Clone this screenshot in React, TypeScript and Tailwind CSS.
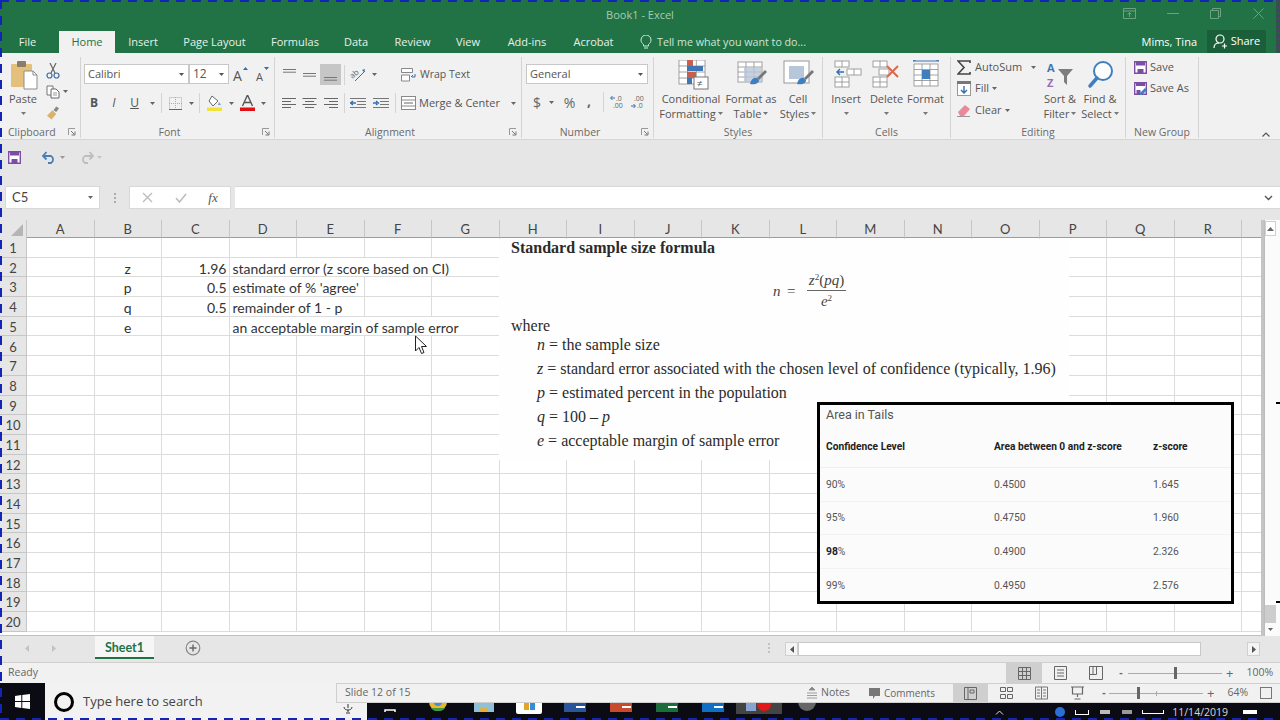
import React from "react";

const Caret = ({ c = "#666", className = "" }: { c?: string; className?: string }) => (
  <svg width="5" height="3" viewBox="0 0 7 4" className={className} preserveAspectRatio="none"><path d="M0 0h7L3.500 4z" fill={c} /></svg>
);
const Launcher = () => (
  <svg width="8" height="8" viewBox="0 0 8 8" className="absolute right-[4px] top-[2px]">
    <path d="M.5 7V.5H7" fill="none" stroke="#999" /><path d="M3 3l3.500 3.500M7 3.500V7H3.500" fill="none" stroke="#777" />
  </svg>
);
const Group = ({ w, label, launcher, children, labelClass = "" }: { w: string; label: string; launcher?: boolean; children: React.ReactNode; labelClass?: string }) => (
  <div className={`${w} h-[81px] shrink-0 border-r border-[#d4d4d4] flex flex-col`}>
    <div className="h-[69px] relative">{children}</div>
    <div className={`relative h-[12px] leading-[12px] text-[10.500px] text-[#6a6a6a] text-center ${labelClass}`}>
      {label}
      {launcher && <Launcher />}
    </div>
  </div>
);
const Box = ({ w, children, className = "" }: { w: string; children?: React.ReactNode; className?: string }) => (
  <div className={`${w} shrink-0 flex items-center justify-center ${className}`}>{children}</div>
);
const VSep = ({ className = "" }: { className?: string }) => <div className={`w-px h-[20px] bg-[#d4d4d4] shrink-0 ${className}`} />;
const Combo = ({ w, text, textClass = "" }: { w: string; text: string; textClass?: string }) => (
  <div className={`${w} h-[20px] bg-white border border-[#c8c8c8] flex items-center justify-between px-[3px] shrink-0`}>
    <span className={`text-[11px] text-[#555] ${textClass}`}>{text}</span>
    <Caret c="#555" className="mr-[1px]" />
  </div>
);

const AlignLines = ({ v, h }: { v: "t" | "m" | "b"; h?: boolean }) => {
  const y = v === "t" ? 2 : v === "m" ? 6 : 10;
  return (
    <svg width="15" height="15" viewBox="0 0 15 15">
      {[0, 3, 6].filter((_, i) => i < 2 || !h).map((d) => (
        <rect key={d} x="1" y={y + d * 0.9} width="13" height="1" fill="#777" />
      ))}
    </svg>
  );
};
const HAlign = ({ a }: { a: "l" | "c" | "r" }) => {
  const rows = [14, 9, 14, 9];
  return (
    <svg width="15" height="13" viewBox="0 0 15 13">
      {rows.map((w, i) => {
        const x = a === "l" ? 0 : a === "c" ? (15 - w) / 2 : 15 - w;
        return <rect key={i} x={x} y={1 + i * 3} width={w} height="1" fill="#666" />;
      })}
    </svg>
  );
};
const Indent = ({ right }: { right?: boolean }) => (
  <svg width="16" height="13" viewBox="0 0 16 13">
    {[1, 4, 7, 10].map((y) => <rect key={y} x={y === 4 || y === 7 ? 7 : 0} y={y} width={y === 4 || y === 7 ? 9 : 16} height="1" fill="#777" />)}
    <path d={right ? "M0 6h4M3 4l2.500 2L3 8" : "M6 6H1M3 4L.5 6 3 8"} fill="none" stroke="#2f6fb0" strokeWidth="1.300" />
  </svg>
);
const Save = ({ c = "#7b4ea3" }: { c?: string }) => (
  <svg width="13" height="13" viewBox="0 0 13 13">
    <path d="M.7.7h11.600v11.600H.7z" fill="#fff" stroke={c} strokeWidth="1.400" />
    <rect x="2" y="1" width="9" height="3.500" fill={c} /><rect x="3.500" y="8" width="6" height="4" fill={c} />
  </svg>
);
const SaveAs = () => (
  <svg width="13" height="13" viewBox="0 0 13 13">
    <path d="M.7.7h11.600v11.600H.7z" fill="#fff" stroke="#7b4ea3" strokeWidth="1.400" />
    <rect x="2" y="1" width="9" height="3" fill="#7b4ea3" /><rect x="2.500" y="8" width="4" height="4" fill="#7b4ea3" />
    <path d="M6 11l5-5 2 2-5 5H6z" fill="#3f7fbd" />
  </svg>
);
const BigIcon = ({ children }: { children: React.ReactNode }) => (
  <svg width="36" height="30" viewBox="0 0 36 30">{children}</svg>
);
const TableGrid = ({ x, y, w, h, n = 3, m = 4 }: { x: number; y: number; w: number; h: number; n?: number; m?: number }) => (
  <g stroke="#8d8d8d" strokeWidth="0.800" fill="#fff">
    <rect x={x} y={y} width={w} height={h} />
    {Array.from({ length: n - 1 }, (_, i) => <path key={i} d={`M${x + ((i + 1) * w) / n} ${y}v${h}`} />)}
    {Array.from({ length: m - 1 }, (_, i) => <path key={"r" + i} d={`M${x} ${y + ((i + 1) * h) / m}h${w}`} />)}
  </g>
);
const Brush = ({ x, y }: { x: number; y: number }) => (
  <g transform={`translate(${x} ${y})`}>
    <path d="M7 8L15 0l2 2-8 8z" fill="#777" />
    <path d="M0 14c1-5 4-7 7-6l2 2c0 3-3 5-9 4z" fill="#3f7fbd" />
  </g>
);
const BigBtn = ({ w, icon, l1, l2, caret }: { w: string; icon: React.ReactNode; l1: string; l2?: string; caret?: boolean }) => (
  <div className={`${w} shrink-0 flex flex-col items-center pt-[3px] text-[11px] leading-[15px] text-[#555]`}>
    <div className="h-[30px] flex items-center justify-center">{icon}</div>
    <div className="mt-[1px] whitespace-nowrap">{l1}</div>
    {l2 ? (
      <div className="flex items-center gap-[2px] whitespace-nowrap">{l2}{caret && <Caret c="#777" />}</div>
    ) : (
      <div className="h-[15px] flex items-center"><Caret c="#777" /></div>
    )}
  </div>
);

const Ribbon = () => (
  <div className="h-[87px] bg-[#f1f1f1] border-b border-[#d6d6d6] pt-[4px] flex shrink-0 [font-family:'Open_Sans',sans-serif]">
    <Group w="w-[81px]" label="Clipboard" launcher labelClass="text-left pl-[8px]">
      <div className="flex">
        <BigBtn w="w-[46px]" l1="Paste" icon={
          <svg width="28" height="29" viewBox="0 0 28 29" className="ml-[3px]">
            <rect x="0" y="3" width="21" height="23" rx="1" fill="#e3c17d" />
            <rect x="6" y="0" width="9" height="6" rx="1" fill="#8a7d6a" />
            <path d="M13 10h9l4 4v14H13z" fill="#fff" stroke="#8d8d8d" /><path d="M22 10v4h4" fill="none" stroke="#8d8d8d" />
          </svg>
        } />
        <div className="flex flex-col pt-[3px]">
          <Box w="w-[14px] h-[21px]">
            <svg width="14" height="16" viewBox="0 0 14 16"><path d="M4 0l5 10M10 0L5 10" stroke="#666" strokeWidth="1.200" /><circle cx="3.500" cy="12.500" r="2.500" fill="none" stroke="#3c6ea6" strokeWidth="1.200" /><circle cx="10.500" cy="12.500" r="2.500" fill="none" stroke="#3c6ea6" strokeWidth="1.200" /></svg>
          </Box>
          <div className="flex items-center h-[21px]">
            <Box w="w-[14px]">
              <svg width="14" height="14" viewBox="0 0 14 14"><path d="M1 1h6v9H1z" fill="#fff" stroke="#777" /><path d="M5 4h5l3 3v6H5z" fill="#fff" stroke="#666" /><path d="M7 8h4M7 10h4" stroke="#999" /></svg>
            </Box>
            <Caret className="ml-[3px]" />
          </div>
          <Box w="w-[14px] h-[21px]">
            <svg width="15" height="15" viewBox="0 0 15 15"><path d="M8 5l3-4 3 2-3 4z" fill="#888" /><path d="M1 11l6-6 4 4-5 6z" fill="#d9b36c" /></svg>
          </Box>
        </div>
      </div>
    </Group>
    <Group w="w-[194px]" label="Font" launcher labelClass="pr-[16px]">
      <div className="flex pl-[3px] pt-[7px] h-[27px] items-center">
        <Combo w="w-[105px]" text="Calibri" />
        <Combo w="w-[40px]" text="12" textClass="text-[12px]" />
        <Box w="w-[23px]">
          <svg width="15" height="15" viewBox="0 0 15 15" className="overflow-visible"><text x="0" y="14" fontSize="14" fill="#555" fontFamily="Open Sans">A</text><path d="M10 3l2.500-3L15 3z" fill="#2f6fb0" /></svg>
        </Box>
        <Box w="w-[20px]">
          <svg width="13" height="15" viewBox="0 0 13 15" className="overflow-visible"><text x="0" y="14" fontSize="11" fill="#555" fontFamily="Open Sans">A</text><path d="M8 0l2.500 3L13 0z" fill="#2f6fb0" /></svg>
        </Box>
      </div>
      <div className="flex items-center h-[20px] mt-[9px] pl-[3px] text-[12px] text-[#555]">
        <Box w="w-[20px]" className="font-bold">B</Box>
        <Box w="w-[20px]" className="italic">I</Box>
        <Box w="w-[21px]" className="underline">U</Box>
        <Box w="w-[15px]"><Caret /></Box>
        <VSep className="ml-[1px]" />
        <Box w="w-[26px]">
          <svg width="13" height="13" viewBox="0 0 13 13"><rect x=".5" y=".5" width="12" height="12" fill="none" stroke="#aaa" strokeDasharray="1 1" /><path d="M6.500 0v13M0 6.500h13" stroke="#aaa" strokeDasharray="1 1" /><path d="M0 12.500h13" stroke="#666" /></svg>
        </Box>
        <Box w="w-[6px]"><Caret /></Box>
        <div className="w-[5px]" />
        <VSep />
        <Box w="w-[27px]" className="ml-[1px]">
          <svg width="15" height="16" viewBox="0 0 15 16"><path d="M5 1l6 5-5 5-4-5z" fill="#fff" stroke="#666" /><path d="M12 7l2 3h-3z" fill="#6aa0d0" /><rect y="12.500" width="15" height="3.500" fill="#f2e33a" /></svg>
        </Box>
        <Box w="w-[6px]"><Caret /></Box>
        <Box w="w-[26px]">
          <svg width="15" height="16" viewBox="0 0 15 16"><path d="M2.500 11L7.500 0l5 11M4.500 7.500h6" fill="none" stroke="#555" strokeWidth="1.400" /><rect y="12.500" width="15" height="3.500" fill="#e30e16" /></svg>
        </Box>
        <Box w="w-[6px]"><Caret /></Box>
      </div>
    </Group>
    <Group w="w-[247px]" label="Alignment" launcher labelClass="pr-[16px]">
      <div className="flex items-center h-[21px] mt-[7px] pl-[4px]">
        <Box w="w-[20px]"><AlignLines v="t" h /></Box>
        <Box w="w-[21px]"><AlignLines v="m" h /></Box>
        <Box w="w-[21px] h-[21px] bg-[#c6c6c6]"><AlignLines v="b" /></Box>
        <div className="w-[3px]" /><VSep />
        <Box w="w-[26px]">
          <svg width="16" height="15" viewBox="0 0 16 15" className="overflow-visible">
            <text x="0" y="10" fontSize="8" fill="#666" fontFamily="Open Sans" transform="rotate(-40 4 8)">ab</text>
            <path d="M5 14L15 4" fill="none" stroke="#666" /><path d="M15 2l-3 1 2 2z" fill="#2f6fb0" />
          </svg>
        </Box>
        <Box w="w-[6px]"><Caret /></Box>
        <div className="w-[24px]" />
        <div className="flex items-center gap-[3px] text-[10.500px] text-[#555]">
          <svg width="16" height="14" viewBox="0 0 16 14"><path d="M.5.5h11v4H.5zM.5 7h8v6H.500z" fill="#fff" stroke="#888" /><path d="M11 9h3V6M10 9l2-2" fill="none" stroke="#2f6fb0" /></svg>
          Wrap Text
        </div>
      </div>
      <div className="flex items-center h-[20px] mt-[8px] pl-[4px]">
        <Box w="w-[20px]"><HAlign a="l" /></Box>
        <Box w="w-[21px]"><HAlign a="c" /></Box>
        <Box w="w-[21px]"><HAlign a="r" /></Box>
        <div className="w-[3px]" /><VSep />
        <Box w="w-[25px]"><Indent /></Box>
        <Box w="w-[21px]"><Indent right /></Box>
        <div className="w-[4px]" /><VSep />
        <div className="flex items-center gap-[3px] text-[11px] text-[#555] ml-[5px] whitespace-nowrap">
          <svg width="15" height="14" viewBox="0 0 15 14"><rect x=".5" y=".5" width="14" height="13" fill="#fff" stroke="#888" /><path d="M.5 4h14M.5 10h14" stroke="#888" /><path d="M3 7h9" stroke="#666" /></svg>
          Merge &amp; Center
          <Caret className="ml-[8px]" />
        </div>
      </div>
    </Group>
    <Group w="w-[132px]" label="Number" launcher labelClass="pr-[15px]">
      <div className="pl-[4px] pt-[7px]"><Combo w="w-[122px]" text="General" /></div>
      <div className="flex items-center h-[22px] mt-[7px] pl-[8px] text-[#666]">
        <Box w="w-[14px]" className="text-[14px]">$</Box>
        <Box w="w-[15px]"><Caret /></Box>
        <Box w="w-[21px]" className="text-[14px]">%</Box>
        <Box w="w-[18px]" className="font-bold text-[14px] -mt-[3px]">,</Box>
        <div className="w-[5px]" /><VSep />
        <Box w="w-[27px]" className="text-[8px] leading-[8px]">
          <svg width="16" height="14" viewBox="0 0 16 14" className="overflow-visible"><path d="M5 3H1M2.500 1L.5 3l2 2" fill="none" stroke="#2f6fb0" /><text x="6" y="6" fontSize="7" fill="#666" fontFamily="Open Sans">.0</text><text x="3" y="13" fontSize="7" fill="#666" fontFamily="Open Sans">.00</text></svg>
        </Box>
        <Box w="w-[14px]" className="text-[8px] leading-[8px]">
          <svg width="16" height="14" viewBox="0 0 16 14" className="overflow-visible"><text x="4" y="6" fontSize="7" fill="#666" fontFamily="Open Sans">.00</text><path d="M1 11h4M3.500 9l2 2-2 2" fill="none" stroke="#2f6fb0" /><text x="7" y="13" fontSize="7" fill="#666" fontFamily="Open Sans">.0</text></svg>
        </Box>
      </div>
    </Group>
    <Group w="w-[169px]" label="Styles">
      <div className="flex">
        <BigBtn w="w-[74px]" l1="Conditional" l2="Formatting" caret icon={
          <BigIcon>
            <TableGrid x={6} y={0} w={26} h={24} />
            <rect x="14" y="0" width="6" height="6" fill="#c95f4b" /><rect x="14" y="6" width="16" height="5" fill="#3f77b5" /><rect x="14" y="12" width="9" height="6" fill="#c95f4b" /><rect x="14" y="18" width="5" height="6" fill="#3f77b5" />
            <rect x="21" y="17" width="14" height="12" fill="#fff" stroke="#777" />
            <text x="24" y="27" fontSize="10" fill="#555" fontFamily="Open Sans">≠</text>
          </BigIcon>
        } />
        <BigBtn w="w-[46px]" l1="Format as" l2="Table" caret icon={
          <BigIcon>
            <TableGrid x={5} y={2} w={24} h={20} />
            <rect x="11" y="7" width="18" height="15" fill="#b9c6d8" opacity=".8" />
            <Brush x={17} y={10} />
          </BigIcon>
        } />
        <BigBtn w="w-[48px]" l1="Cell" l2="Styles" caret icon={
          <BigIcon>
            <rect x="4" y="1" width="25" height="22" fill="#fff" stroke="#999" />
            <rect x="9" y="6" width="15" height="13" fill="#b6c7dc" />
            <Brush x={17} y={10} />
          </BigIcon>
        } />
      </div>
    </Group>
    <Group w="w-[128px]" label="Cells">
      <div className="flex pl-[1px]">
        <BigBtn w="w-[44px]" l1="Insert" icon={
          <BigIcon>
            <g fill="#fff" stroke="#8a8a8a" strokeWidth=".8"><rect x="7" y="1" width="14" height="6" /><path d="M14 1v6" /><rect x="19" y="9" width="14" height="6" /><path d="M26 9v6" /><rect x="7" y="17" width="14" height="10" /><path d="M14 17v10M7 22h14" /></g>
            <path d="M16 12H9M12 9l-3 3 3 3" fill="none" stroke="#2f6fb0" strokeWidth="1.400" />
          </BigIcon>
        } />
        <BigBtn w="w-[37px]" l1="Delete" icon={
          <BigIcon>
            <g fill="#fff" stroke="#8a8a8a" strokeWidth=".8"><rect x="4" y="1" width="14" height="6" /><path d="M11 1v6" /><rect x="10" y="9" width="10" height="6" /><rect x="4" y="17" width="14" height="10" /><path d="M11 17v10M4 22h14" /></g>
            <path d="M18 6l11 11M29 6L18 17" stroke="#d9694f" strokeWidth="2" />
          </BigIcon>
        } />
        <BigBtn w="w-[41px]" l1="Format" icon={
          <BigIcon>
            <path d="M5 1h26M5 1l3-1M31 1l-3-1" stroke="#3f77b5" fill="none" />
            <TableGrid x={6} y={4} w={24} h={22} />
            <rect x="14" y="10" width="8" height="9" fill="#3f7fbd" />
          </BigIcon>
        } />
      </div>
    </Group>
    <Group w="w-[175px]" label="Editing">
      <div className="flex">
        <div className="w-[91px] pl-[6px] flex flex-col text-[11px] text-[#555] shrink-0">
          <div className="flex items-center h-[21px]">
            <svg width="14" height="15" viewBox="0 0 14 15"><path d="M13 3V1H1l6 6.500L1 14h12v-2" fill="none" stroke="#444" strokeWidth="1.600" /></svg>
            <span className="ml-[4px]">AutoSum</span><Caret className="ml-[9px]" />
          </div>
          <div className="flex items-center h-[21px]">
            <svg width="14" height="15" viewBox="0 0 14 15"><rect x=".5" y=".5" width="13" height="14" fill="#fff" stroke="#999" /><rect width="14" height="3" fill="#777" /><path d="M7 5v7M4 9l3 3 3-3" fill="none" stroke="#2f6fb0" strokeWidth="1.400" /></svg>
            <span className="ml-[4px]">Fill</span><Caret className="ml-[3px]" />
          </div>
          <div className="flex items-center h-[22px]">
            <svg width="14" height="13" viewBox="0 0 14 13"><path d="M1 8l7-7 5 4-6 7H3z" fill="#e98a9a" /><path d="M0 12.500h13" stroke="#999" /></svg>
            <span className="ml-[4px]">Clear</span><Caret className="ml-[3px]" />
          </div>
        </div>
        <BigBtn w="w-[36px]" l1="Sort &" l2="Filter" caret icon={
          <svg width="30" height="28" viewBox="0 0 30 28" className="overflow-visible">
            <text x="2" y="11" fontSize="11" fontWeight="700" fill="#3f77b5" fontFamily="Open Sans">A</text>
            <text x="2" y="26" fontSize="11" fontWeight="700" fill="#9a6ab5" fontFamily="Open Sans">Z</text>
            <path d="M13 8h15l-6 7v9l-3-3v-6z" fill="#7d7d7d" />
          </svg>
        } />
        <BigBtn w="w-[44px]" l1="Find &" l2="Select" caret icon={
          <svg width="28" height="30" viewBox="0 0 28 30">
            <circle cx="17" cy="11" r="9" fill="#fff" stroke="#3f7fbd" strokeWidth="2" />
            <path d="M11 18L4 26" stroke="#3f7fbd" strokeWidth="3.500" strokeLinecap="round" />
          </svg>
        } />
      </div>
    </Group>
    <Group w="w-[73px]" label="New Group">
      <div className="flex flex-col pl-[8px] text-[11px] text-[#555]">
        <div className="flex items-center h-[21px] gap-[3px]"><Save /><span>Save</span></div>
        <div className="flex items-center h-[21px] gap-[3px]"><SaveAs /><span>Save As</span></div>
      </div>
    </Group>
    <div className="flex-1 flex items-end justify-end pb-[2px] pr-[10px]">
      <svg width="8" height="5" viewBox="0 0 8 5"><path d="M.5 4.500L4 1l3.500 3.500" fill="none" stroke="#555" strokeWidth="1.200" /></svg>
    </div>
  </div>
);

const TITLE_TABS: [string, string][] = [
  ["Insert", "w-[56px]"], ["Page Layout", "w-[87px]"], ["Formulas", "w-[74px]"], ["Data", "w-[48px]"],
  ["Review", "w-[65px]"], ["View", "w-[46px]"], ["Add-ins", "w-[72px]"], ["Acrobat", "w-[61px]"],
];

const TitleBar = () => (
  <div className="bg-[#217346] shrink-0 [font-family:'Open_Sans',sans-serif]">
    <div className="h-[2px] bg-[repeating-linear-gradient(90deg,#1424b4_0_9px,#217346_9px_16px)]" />
    <div className="h-[29px] flex items-center">
      <div className="w-[1280px] text-center text-[11px] text-[#a5cdb5] -mt-[2px]">Book1 - Excel</div>
    </div>
    <div className="h-[22px] flex items-stretch text-[11px] text-[#e6f1ea]">
      <div className="w-[55px] flex items-center justify-center font-medium">File</div>
      <div className="w-[4px]" />
      <div className="w-[56px] bg-[#f1f1f1] text-[#217346] flex items-center justify-center">Home</div>
      {TITLE_TABS.map(([t, w]) => (
        <div key={t} className={`${w} flex items-center justify-center`}>{t}</div>
      ))}
      <div className="ml-[16px] w-[17px] flex items-center">
        <svg width="12" height="15" viewBox="0 0 12 15"><path d="M3.500 9.500C2 8 1 7 1 5a5 5 0 0110 0c0 2-1 3-2.500 4.500v1.500h-5zM4 13h4" fill="none" stroke="#d5e8dc" strokeWidth="1" /></svg>
      </div>
      <div className="flex items-center text-[10.700px] text-[#cfe5d7] whitespace-nowrap">Tell me what you want to do...</div>
      <div className="flex-1" />
      <div className="flex items-center text-white mr-[10px] whitespace-nowrap">Mims, Tina</div>
      <div className="w-[59px] bg-[#1b5f3a] flex items-center justify-center gap-[3px] text-white mr-[14px] -mt-[1px]">
        <svg width="15" height="15" viewBox="0 0 15 15"><circle cx="7" cy="5" r="4" fill="none" stroke="#fff" strokeWidth="1.200" /><path d="M1 14c0-3 2-5 5-5M9 12h5M11.500 9.500v5" fill="none" stroke="#fff" strokeWidth="1.200" /></svg>
        Share
      </div>
    </div>
  </div>
);

const QAT = () => (
  <div className="h-[45px] bg-[#e6e6e6] flex items-center pl-[8px] pb-[11px] shrink-0">
    <Save c="#7b4ea3" />
    <Box w="w-[22px]" className="ml-[17px]">
      <svg width="15" height="13" viewBox="0 0 15 13"><path d="M1 5h8a4 4 0 010 7H6M4.500 1L1 5l3.500 3.500" fill="none" stroke="#4a7eb5" strokeWidth="1.800" /></svg>
    </Box>
    <Caret c="#999" />
    <Box w="w-[22px]" className="ml-[10px]">
      <svg width="15" height="13" viewBox="0 0 15 13"><path d="M14 5H6a4 4 0 000 7h3M10.500 1L14 5l-3.500 3.500" fill="none" stroke="#bdbdbd" strokeWidth="1.800" /></svg>
    </Box>
    <Caret c="#c6c6c6" />
  </div>
);

const FormulaBar = () => (
  <div className="h-[35px] bg-[#e6e6e6] flex gap-0 pt-[1px] shrink-0 items-start [font-family:'Lato',sans-serif]">
    <div className="ml-[5px] w-[95px] h-[23px] bg-white border border-[#d8d8d8] flex items-center justify-between px-[6px] text-[13px] text-[#444]">
      C5<Caret />
    </div>
    <Box w="w-[29px] h-[23px]">
      <svg width="2" height="10" viewBox="0 0 2 10"><path d="M1 0v2M1 4v2M1 8v2" stroke="#999" strokeWidth="1.500" /></svg>
    </Box>
    <div className="w-[102px] h-[23px] bg-white border border-[#d8d8d8] flex items-center">
      <Box w="w-[34px]">
        <svg width="11" height="11" viewBox="0 0 11 11"><path d="M1 1l9 9M10 1l-9 9" stroke="#bdbdbd" strokeWidth="1.400" /></svg>
      </Box>
      <Box w="w-[34px]">
        <svg width="12" height="10" viewBox="0 0 12 10"><path d="M1 5l3.500 4L11 1" fill="none" stroke="#bdbdbd" strokeWidth="1.600" /></svg>
      </Box>
      <Box w="w-[30px]" className="[font-family:'Liberation_Serif',serif] italic text-[13px] text-[#555]">fx</Box>
    </div>
    <div className="ml-[4px] flex-1 h-[23px] bg-white border-y border-[#d8d8d8] flex items-center justify-end pr-[7px]">
      <svg width="9" height="6" viewBox="0 0 9 6"><path d="M1 1l3.500 3.500L8 1" fill="none" stroke="#555" strokeWidth="1.400" /></svg>
    </div>
  </div>
);

const COLS = "ABCDEFGHIJKLMNOPQR".split("");
const GRID = "grid grid-cols-[27px_repeat(18,67.500px)_1fr]";
const BODY: Record<number, { c: number; span?: string; text: string; cls: string }[]> = {
  2: [{ c: 2, text: "z", cls: "text-center" }, { c: 3, text: "1.96", cls: "text-right pr-[2px]" }, { c: 4, span: "col-span-4", text: "standard error (z score based on CI)", cls: "pl-[3px]" }],
  3: [{ c: 2, text: "p", cls: "text-center" }, { c: 3, text: "0.5", cls: "text-right pr-[2px]" }, { c: 4, span: "col-span-2", text: "estimate of % 'agree'", cls: "pl-[3px]" }],
  4: [{ c: 2, text: "q", cls: "text-center" }, { c: 3, text: "0.5", cls: "text-right pr-[2px]" }, { c: 4, span: "col-span-2", text: "remainder of 1 - p", cls: "pl-[3px]" }],
  5: [{ c: 2, text: "e", cls: "text-center" }, { c: 4, span: "col-span-4", text: "an acceptable margin of sample error", cls: "pl-[3px]" }],
};
const SPAN: Record<string, number> = { "col-span-4": 4, "col-span-2": 2 };

const Sheet = () => (
  <div className="flex shrink-0 [font-family:'Lato',sans-serif]">
    <div className="w-[1261px] shrink-0">
      <div className={`${GRID} h-[18px] bg-[#e6e6e6] text-[13px] text-[#444]`}>
        <div className="border-r border-[#c6c6c6] flex items-end justify-end pr-[3px] pb-[2px]">
          <svg width="12" height="12" viewBox="0 0 12 12"><path d="M12 0v12H0z" fill="#b5b5b5" /></svg>
        </div>
        {COLS.map((c) => (
          <div key={c} className="border-r border-[#c6c6c6] border-b border-b-[#9c9c9c] flex items-center justify-center leading-none pt-[2px]">{c}</div>
        ))}
        <div className="border-b border-[#9c9c9c]" />
      </div>
      <div className={`${GRID} auto-rows-[19.700px] h-[398px] bg-white text-[14px] text-[#333] border-b border-[#c0c0c0] content-start`}>
        {Array.from({ length: 20 }, (_, i) => i + 1).map((r) => {
          const items = BODY[r] || [];
          const out: React.ReactNode[] = [
            <div key="h" className="bg-[#e6e6e6] border-r border-b border-[#c6c6c6] flex items-center justify-center text-[13px] text-[#444] pt-[3px]">{r}</div>,
          ];
          for (let c = 1; c <= 19; c++) {
            const it = items.find((x) => x.c === c);
            if (it) {
              out.push(
                <div key={c} className={`${it.span || ""} border-r border-b border-[#dcdcdc] whitespace-nowrap leading-[22px] ${it.cls}`}>{it.text}</div>
              );
              if (it.span) c += SPAN[it.span] - 1;
            } else {
              out.push(<div key={c} className={`${c === 19 ? "" : "border-r"} border-b border-[#dcdcdc]`} />);
            }
          }
          return <React.Fragment key={r}>{out}</React.Fragment>;
        })}
      </div>
    </div>
    <div className="flex-1 h-[416px] bg-[#fbfbfb] border-l-[3px] border-[#c4c4c4] flex">
      <div className="w-[1px] bg-[#bdbdbd]" />
      <div className="w-[11px] flex flex-col items-center pt-[1px]">
        <div className="w-[11px] h-[15px] bg-white border border-[#d0d0d0] flex items-center justify-center">
          <svg width="7" height="4" viewBox="0 0 7 4"><path d="M3.500 0L7 4H0z" fill="#666" /></svg>
        </div>
        <div className="flex-1" />
        <div className="w-[11px] h-[18px] bg-[#cdcdcd]" />
        <div className="w-[11px] h-[13px] flex items-center justify-center"><Caret /></div>
      </div>
      <div className="flex-1 flex flex-col">
        <div className="h-[182px]" />
        <div className="h-[2px] bg-black" />
        <div className="h-[197px]" />
        <div className="h-[2px] bg-black" />
      </div>
    </div>
  </div>
);

const SheetTabs = () => (
  <div className="h-[26px] bg-[#e6e6e6] flex items-start shrink-0 [font-family:'Lato',sans-serif]">
    <div className="w-[95px] h-[24px] flex items-center gap-[23px] pl-[25px] shrink-0">
      <svg width="4" height="7" viewBox="0 0 4 7"><path d="M4 0v7L0 3.500z" fill="#c2c2c2" /></svg>
      <svg width="4" height="7" viewBox="0 0 4 7"><path d="M0 0v7l4-3.500z" fill="#c2c2c2" /></svg>
    </div>
    <div className="w-[59px] h-[23px] pt-[3px] bg-[#f6f6f6] border-b-2 border-[#217346] text-[#217346] font-bold text-[12.500px] flex items-center justify-center">Sheet1</div>
    <Box w="w-[78px] h-[24px]">
      <svg width="16" height="16" viewBox="0 0 16 16"><circle cx="8" cy="8" r="6.800" fill="none" stroke="#888" strokeWidth="1.200" /><path d="M8 4.500v7M4.500 8h7" stroke="#666" strokeWidth="1.400" /></svg>
    </Box>
    <div className="flex-1" />
    <Box w="w-[4px] h-[24px]" className="mr-[14px]">
      <svg width="2" height="10" viewBox="0 0 2 10"><path d="M1 0v2M1 4v2M1 8v2" stroke="#aaa" strokeWidth="1.200" /></svg>
    </Box>
    <div className="w-[475px] mr-[20px] h-[14px] mt-[6px] flex">
      <div className="w-[13px] bg-[#f4f4f4] border border-[#d0d0d0] flex items-center justify-center">
        <svg width="4" height="7" viewBox="0 0 4 7"><path d="M4 0v7L0 3.500z" fill="#555" /></svg>
      </div>
      <div className="w-[403px] bg-white border border-[#c8c8c8]" />
      <div className="flex-1" />
      <div className="w-[13px] bg-[#f4f4f4] border border-[#d0d0d0] flex items-center justify-center">
        <svg width="4" height="7" viewBox="0 0 4 7"><path d="M0 0v7l4-3.500z" fill="#555" /></svg>
      </div>
    </div>
  </div>
);

const Slider = ({ w, thumb, tick }: { w: string; thumb: string; tick?: boolean }) => (
  <div className={`${w} h-[14px] relative flex items-center shrink-0`}>
    <div className="w-full h-px bg-[#aaa]" />
    <div className={`absolute ${thumb} top-[1px] w-[3px] h-[12px] bg-[#666]`} />
    {tick && <div className="absolute left-[47px] top-[5px] w-px h-[5px] bg-[#aaa]" />}
  </div>
);
const ExcelStatus = () => (
  <div className="h-[21px] bg-[#f1f1f1] border-t border-[#d0d0d0] flex items-center text-[10.500px] text-[#666] shrink-0 [font-family:'Open_Sans',sans-serif]">
    <div className="ml-[8px] w-[998px]">Ready</div>
    <Box w="w-[36px] h-[20px] bg-[#cfcfcf]">
      <svg width="13" height="13" viewBox="0 0 13 13"><path d="M.5.5h12v12H.500zM4.500.5v12M8.500.5v12M.5 4.500h12M.5 8.500h12" fill="none" stroke="#666" /></svg>
    </Box>
    <Box w="w-[36px]"><svg width="13" height="14" viewBox="0 0 13 14"><path d="M.5.5h12v13H.500zM3 4h7M3 7h7M3 10h7" fill="none" stroke="#666" /></svg></Box>
    <Box w="w-[36px]"><svg width="14" height="14" viewBox="0 0 14 14"><path d="M.5.500h13v13H.500zM.5 8.500h7V.5M4 .5v8" fill="none" stroke="#666" /></svg></Box>
    <span className="ml-[2px] w-[10px] text-center font-bold">-</span>
    <div className="ml-[2px]"><Slider w="w-[94px]" thumb="left-[46px]" /></div>
    <span className="ml-[4px] text-[13px] leading-none">+</span>
    <span className="ml-[13px]">100%</span>
  </div>
);

const PptStatus = () => (
  <div className="absolute left-[336px] top-[683px] w-[944px] h-[20px] bg-[#f1f1f1] border-l border-t border-b border-[#cfcfcf] flex items-center text-[10.500px] text-[#666] [font-family:'Open_Sans',sans-serif]">
    <span className="ml-[8px] w-[462px]">Slide 12 of 15</span>
    <svg width="10" height="12" viewBox="0 0 10 12"><path d="M5 0l3 3H2zM0 6h10M0 8.500h10M0 11h10" fill="#888" stroke="#888" strokeWidth=".8" /></svg>
    <span className="ml-[4px] w-[48px]">Notes</span>
    <svg width="11" height="11" viewBox="0 0 11 11"><path d="M0 0h11v8H6l-2 3V8H0z" fill="#777" /></svg>
    <span className="ml-[4px] w-[52px] text-[10px]">Comments</span>
    <Box w="w-[35px] h-[19px] bg-[#cfcfcf] ml-[17px]">
      <svg width="13" height="13" viewBox="0 0 13 13"><path d="M.5.5h12v12H.500zM4 .5v12M6 3h4v3H6z" fill="none" stroke="#666" /></svg>
    </Box>
    <Box w="w-[36px]"><svg width="13" height="12" viewBox="0 0 13 12"><path d="M.5.500h5v4h-5zM7.500.500h5v4h-5zM.5 7.500h5v4h-5zM7.500 7.500h5v4h-5z" fill="none" stroke="#666" /></svg></Box>
    <Box w="w-[35px]"><svg width="13" height="14" viewBox="0 0 13 14"><path d="M.5 1h12v12H.500zM6.500 1v12M2 4h3M2 7h3M2 10h3M8 4h3M8 7h3M8 10h3" fill="none" stroke="#777" /></svg></Box>
    <Box w="w-[36px]"><svg width="13" height="14" viewBox="0 0 13 14"><path d="M0 1h13M1.500 1v7h10V1M6.500 8v3M3.500 13h6" fill="none" stroke="#666" strokeWidth="1.200" /></svg></Box>
    <span className="ml-[4px] w-[10px] text-center font-bold">-</span>
    <Slider w="w-[94px]" thumb="left-[28px]" tick />
    <span className="ml-[4px] text-[13px] leading-none">+</span>
    <span className="ml-[13px]">64%</span>
    <Box w="w-[12px] h-[12px] border border-[#777] ml-[12px]" />
  </div>
);

const Peek = ({ bg, lines = "bg-white" }: { bg: string; lines?: string }) => (
  <div className={`w-[22px] h-[20px] ${bg} relative`}>
    <div className={`absolute right-[1px] bottom-[4px] w-[9px] h-[2px] ${lines}`} />
  </div>
);

const TASK: React.ReactNode[] = [
  <svg key="c" width="18" height="18" viewBox="0 0 18 18"><circle cx="9" cy="9" r="9" fill="#e8b829" /><path d="M2 15a9 9 0 0014 0z" fill="#3c9a45" /><circle cx="9" cy="9" r="4" fill="#4a89dc" /></svg>,
  <div key="f" className="w-[20px] h-[20px] bg-[#8fc0d8] flex items-end justify-center"><div className="w-[8px] h-[4px] bg-[#e0b040]" /></div>,
  <div key="s" className="w-[26px] h-[24px] bg-white rounded-[2px] flex items-start justify-center gap-[1px] pt-[13px]"><div className="w-[5px] h-[7px] bg-[#e0a52a]" /><div className="w-[5px] h-[7px] bg-[#2f8fd8]" /></div>,
  <Peek key="w" bg="bg-[#2a5699]" />,
  <Peek key="p" bg="bg-[#c9492c]" />,
  <Peek key="x" bg="bg-[#1d6d3c]" />,
  <Peek key="o" bg="bg-[#0f6fc6]" />,
];

const Taskbar = () => (
  <div className="h-[37px] flex bg-[#0b0b14] relative shrink-0 [font-family:'Open_Sans',sans-serif]">
    <Box w="w-[45px] h-full">
      <svg width="15" height="15" viewBox="0 0 15 15"><path d="M0 2l6.300-1v6H0zM7.300.900L15 0v7H7.300zM0 8h6.300v6L0 13zM7.300 8H15v7l-7.700-1z" fill="#fff" /></svg>
    </Box>
    <div className="w-[322px] bg-[#f2f2f2] flex items-center pl-[9px] relative">
      <div className="w-[20px] h-[20px] rounded-full border-[3px] border-black shrink-0" />
      <span className="ml-[9px] text-[13px] text-[#444] whitespace-nowrap">Type here to search</span>
      <svg width="10" height="10" viewBox="0 0 10 10" className="absolute right-[14px] top-[21px]"><path d="M5 0v4M1 3c0 2 2 3 4 3s4-1 4-3M5 6v2M3 9h4" fill="none" stroke="#333" /></svg>
    </div>
    <div className="flex items-start pt-[6px]">
      <Box w="w-[46px] h-[25px]" className="mr-[2px]">
        <svg width="12" height="22" viewBox="0 0 12 22"><path d="M1 21v-2h10v2" fill="none" stroke="#fff" strokeWidth="1.500" /></svg>
      </Box>
      {TASK.map((t, i) => (
        <Box key={i} w="w-[45.800px] h-[25px]">{t}</Box>
      ))}
      <Box w="w-[46px] h-[31px] bg-[#444] -mt-[6px] pt-[10px] gap-[1px]">
        <div className="w-[10px] h-[14px] bg-[#8aa4d0]" />
        <div className="w-[14px] h-[14px] rounded-full bg-[#e01818]" />
      </Box>
      <Box w="w-[50px] h-[25px]"><div className="w-[18px] h-[18px] rounded-full bg-[#666]" /></Box>
    </div>
    <div className="flex-1" />
    <div className="flex items-center pt-[21px] mr-[23px] text-[10.500px] text-[#d8d8d8]">
      <svg width="9" height="5" viewBox="0 0 9 5"><path d="M1 4.500L4.500 1 8 4.500" fill="none" stroke="#ddd" /></svg>
      <div className="w-[10px] h-[10px] rounded-full bg-[#2a6fd6] ml-[51px]" />
      <div className="w-[14px] h-[5px] border-x border-b border-white ml-[10px]" />
      <div className="w-[10px] h-[4px] bg-[#bbb] ml-[11px]" />
      <div className="w-[10px] h-[4px] bg-[#999] ml-[12px]" />
      <div className="w-[22px] h-[4px] border-x border-b border-white ml-[10px]" />
      <span className="ml-[8px] leading-none">11/14/2019</span>
      <div className="w-[14px] h-[4px] bg-white ml-[15px]" />
    </div>
    <div className="absolute left-0 right-0 bottom-0 h-[2px] bg-[repeating-linear-gradient(90deg,#1424b4_0_9px,transparent_9px_16px)]" />
  </div>
);

const AREA: [string, string, string, boolean?][] = [
  ["90%", "0.4500", "1.645"],
  ["95%", "0.4750", "1.960"],
  ["98", "0.4900", "2.326", true],
  ["99%", "0.4950", "2.576"],
];

const AreaTable = () => (
  <div className="absolute left-[817px] top-[402px] w-[417px] h-[202px] bg-[#fbfbfb] border-[3px] border-black [font-family:'Roboto',sans-serif] text-[#555]">
    <div className="pl-[6px] pt-[2px] text-[12.500px] leading-[15px]">Area in Tails</div>
    <div className="flex h-[45px] items-start pt-[18px] pl-[6px] font-bold text-[10.200px] leading-[12px] text-[#222] border-b border-[#f0f0f0] mt-[1px]">
      <div className="w-[168px]">Confidence Level</div>
      <div className="w-[159px]">Area between 0 and z-score</div>
      <div>z-score</div>
    </div>
    {AREA.map(([a, b, c, bold]) => (
      <div key={b} className="flex h-[33.500px] items-center pl-[6px] text-[10.300px] border-b border-[#f2f2f2] last:border-b-0">
        <div className="w-[168px]">{bold ? <><b className="text-[#222]">{a}</b>%</> : a}</div>
        <div className="w-[159px]">{b}</div>
        <div>{c}</div>
      </div>
    ))}
  </div>
);

const Formula = () => (
  <div className="absolute left-[499px] top-[239px] w-[570px] h-[221px] bg-[#fefefe] [font-family:'Liberation_Serif',serif] text-[#2b2b2b] text-[16px] leading-[24px]">
    <div className="pl-[12px] font-bold text-[16px] leading-[18px]">Standard sample size formula</div>
    <div className="flex items-center h-[57px] pt-[10px] ml-[274px] text-[#444] italic text-[15px]">
      <span className="w-[14px]">n</span>
      <span className="not-italic w-[20px]">=</span>
      <div className="flex flex-col items-center w-[39px]">
        <div className="leading-[19px] whitespace-nowrap">z<sup className="text-[9px] not-italic">2</sup><span className="not-italic">(</span>pq<span className="not-italic">)</span></div>
        <div className="h-px w-full bg-[#666]" />
        <div className="leading-[20px]">e<sup className="text-[9px] not-italic">2</sup></div>
      </div>
    </div>
    <div className="pl-[12px] leading-[20px] mt-[2px]">where</div>
    <div className="pl-[38px] -mt-[1px]">
      <div className="leading-[20px] mb-[2px]"><i>n</i> = the sample size</div>
      <div><i>z</i> = standard error associated with the chosen level of confidence (typically, 1.96)</div>
      <div><i>p</i> = estimated percent in the population</div>
      <div><i>q</i> = 100 – <i>p</i></div>
      <div><i>e</i> = acceptable margin of sample error</div>
    </div>
  </div>
);

export default function App() {
  return (
    <div className="relative w-[1280px] h-[720px] overflow-hidden flex flex-col bg-[#e6e6e6]">
      <TitleBar />
      <Ribbon />
      <QAT />
      <FormulaBar />
      <Sheet />
      <SheetTabs />
      <ExcelStatus />
      <Taskbar />
      <Formula />
      <AreaTable />
      <PptStatus />
      <div className="absolute left-0 top-0 bottom-0 w-[2px] bg-[repeating-linear-gradient(180deg,#1424b4_0_9px,transparent_9px_16px)]" />
      <div className="absolute right-0 top-0 w-[4px] h-[53px] bg-[repeating-linear-gradient(180deg,#4a3f66_0_2px,#2a5a46_2px_5px)]" />
      <div className="absolute left-[1123px] top-[8px] flex items-center">
        <svg width="13" height="11" viewBox="0 0 13 11"><path d="M.5.500h12v10H.500zM.5 3h12M6.500 9V5M4.500 6.500l2-2 2 2" fill="none" stroke="#6aa283" /></svg>
        <div className="w-[12px] h-px bg-[#6aa283] ml-[31px]" />
        <svg width="11" height="11" viewBox="0 0 11 11" className="ml-[31px]"><path d="M.5 2.500h8v8h-8zM2.500 2.500v-2h8v8h-2" fill="none" stroke="#6aa283" /></svg>
        <svg width="11" height="11" viewBox="0 0 11 11" className="ml-[32px]"><path d="M.5.500l10 10M10.500.500l-10 10" stroke="#6aa283" /></svg>
      </div>
      <svg width="14" height="20" viewBox="0 0 14 20" className="absolute left-[414px] top-[335px]">
        <path d="M1.500 1v15l3.500-3.500 2.500 6 2.500-1-2.500-6h5z" fill="#fff" stroke="#222" strokeWidth="1" />
      </svg>
    </div>
  );
}
